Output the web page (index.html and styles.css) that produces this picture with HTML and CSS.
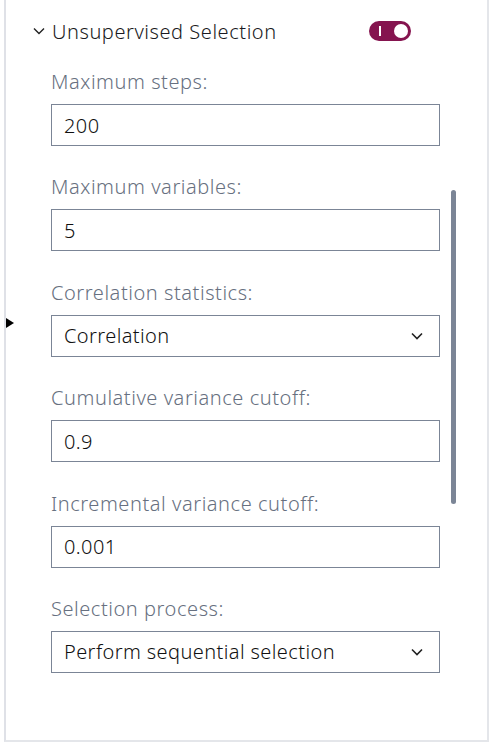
FILE: index.html
```html
<!DOCTYPE html>
<html>
<head>
<meta charset="utf-8">
<link rel="stylesheet" href="styles.css">
</head>
<body>
<div class="panel">
  <span class="marker"></span>
  <div class="scrollbar"></div>
  <div class="header">
    <svg class="chev" width="12" height="8" viewBox="0 0 12 8"><path d="M1 1.5 L6 6.5 L11 1.5" fill="none" stroke="#222" stroke-width="1.4"/></svg>
    <span class="title">Unsupervised Selection</span>
    <span class="toggle"><span class="bar"></span><span class="knob"></span></span>
  </div>
  <div class="fields">
    <div class="field">
      <div class="label">Maximum steps:</div>
      <div class="input">200</div>
    </div>
    <div class="field">
      <div class="label">Maximum variables:</div>
      <div class="input">5</div>
    </div>
    <div class="field">
      <div class="label">Correlation statistics:</div>
      <div class="input select"><span>Correlation</span><svg width="12" height="8" viewBox="0 0 12 8"><path d="M1 1.5 L6 6.5 L11 1.5" fill="none" stroke="#222" stroke-width="1.6"/></svg></div>
    </div>
    <div class="field">
      <div class="label">Cumulative variance cutoff:</div>
      <div class="input">0.9</div>
    </div>
    <div class="field">
      <div class="label">Incremental variance cutoff:</div>
      <div class="input">0.001</div>
    </div>
    <div class="field">
      <div class="label">Selection process:</div>
      <div class="input select"><span>Perform sequential selection</span><svg width="12" height="8" viewBox="0 0 12 8"><path d="M1 1.5 L6 6.5 L11 1.5" fill="none" stroke="#222" stroke-width="1.6"/></svg></div>
    </div>
  </div>
</div>
</body>
</html>
```
FILE: styles.css
```css
html, body { margin: 0; padding: 0; background: #fff; }
body { font-family: "Noto Sans", "Open Sans", sans-serif; width: 490px; height: 742px; overflow: hidden; }
.panel {
  position: relative;
  box-sizing: border-box;
  margin-left: 4px;
  width: 485px;
  height: 742px;
  padding-top: 19px;
  border-left: 2px solid #dfe1e7;
  border-right: 2px solid #e4e6ea;
  border-bottom: 2px solid #e4e6ea;
}
.marker {
  position: absolute;
  left: 0; top: 318px;
  width: 0; height: 0;
  border-top: 5px solid transparent;
  border-bottom: 5px solid transparent;
  border-left: 8px solid #000;
}
.scrollbar {
  position: absolute;
  left: 445px; top: 190px;
  width: 5px; height: 314px;
  border-radius: 3px;
  background: #7b8596;
}
.header {
  display: flex;
  align-items: center;
  height: 24px;
  padding-left: 27px;
}
.chev { margin-right: 7px; }
.title { font-size: 20px; font-weight: 300; letter-spacing: 0.55px; color: #1a1a22; }
.toggle {
  position: relative;
  margin-left: 92px;
  width: 42px; height: 20px;
  border-radius: 10px;
  background: #85144f;
}
.toggle .bar { position: absolute; left: 10px; top: 5px; width: 2px; height: 10px; background: #fff; }
.toggle .knob { position: absolute; right: 3px; top: 3px; width: 14px; height: 14px; border-radius: 50%; background: #fff; }
.fields { padding: 27px 0 0 45px; }
.field { margin-bottom: 29.4px; }
.label { font-size: 20px; font-weight: 300; letter-spacing: 0.55px; line-height: 24px; color: #677080; height: 24px; white-space: nowrap; }
.input {
  box-sizing: border-box;
  margin-top: 10px;
  width: 389px; height: 42px;
  border: 1px solid #7b8596;
  padding: 0 12px;
  display: flex; align-items: center; justify-content: space-between;
  font-size: 20px; font-weight: 300; letter-spacing: 0.4px; color: #111;
}
.select svg { margin-right: 4px; }
```
